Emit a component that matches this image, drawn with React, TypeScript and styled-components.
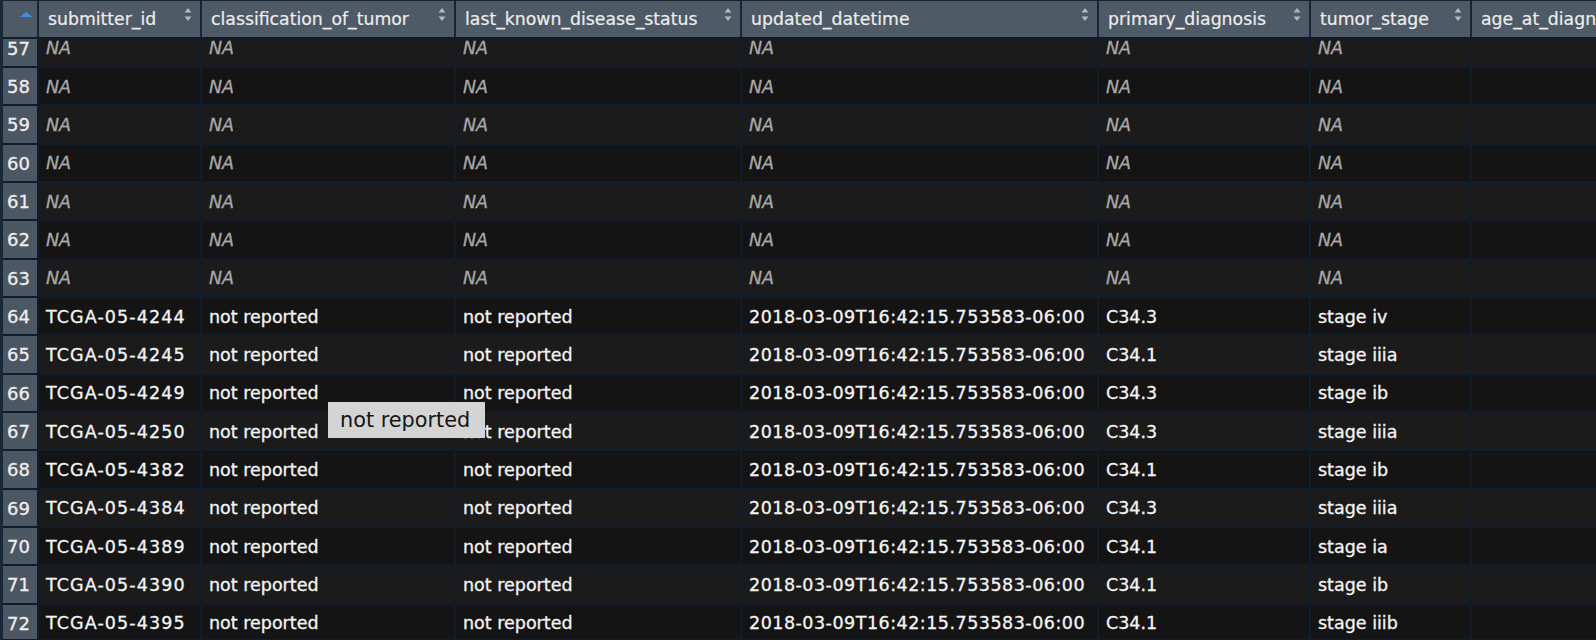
import React from "react";
import styled, { createGlobalStyle } from "styled-components";

const GlobalStyle = createGlobalStyle`
  html, body {
    margin: 0;
    padding: 0;
    background: #141414;
    overflow: hidden;
  }
  * { box-sizing: border-box; }
`;

const COLS = "34px 161px 252px 284px 355px 210px 159px 220px";
const GRID_LINE = "#0f1c2b";

const Viewer = styled.div`
  position: relative;
  width: 1596px;
  height: 640px;
  overflow: hidden;
  background: ${GRID_LINE};
  border-left: 3px solid #1a2737;
  font-family: "DejaVu Sans", "Lucida Grande", Verdana, sans-serif;
`;

const HeaderRow = styled.div`
  display: grid;
  grid-template-columns: ${COLS};
  column-gap: 2px;
  width: max-content;
  height: 39px;
  border-top: 1px solid #142232;
  border-bottom: 2px solid ${GRID_LINE};
  background: #172535;
  position: relative;
  z-index: 1;
`;

const HeaderCell = styled.div`
  display: flex;
  align-items: center;
  padding: 0 8px 0 9px;
  background: #4e5a66;
  color: #ececec;
  font-size: 17.3px;
  -webkit-text-stroke: 0.2px #ececec;
  white-space: nowrap;
  overflow: hidden;
`;

const CornerCell = styled.div`
  display: flex;
  justify-content: flex-end;
  align-items: flex-start;
  padding: 11px 5px 0 0;
  background: #4e5a66;
`;

const HeaderLabel = styled.span`
  flex: 0 0 auto;
  padding-bottom: 1px;
`;

const SortIcon = styled.svg`
  flex: 0 0 auto;
  margin-left: auto;
  align-self: flex-start;
  margin-top: 7px;
`;

const Body = styled.div`
  height: 600px;
  overflow: hidden;
`;

const BodyInner = styled.div`
  display: flex;
  flex-direction: column;
  row-gap: 2px;
  margin-top: -9.33px;
  width: max-content;
`;

const Row = styled.div`
  display: grid;
  grid-template-columns: ${COLS};
  column-gap: 2px;
  height: 36.33px;
`;

const RowNum = styled.div`
  display: flex;
  align-items: center;
  padding: 1px 0 0 4px;
  background: #4b5763;
  color: #eeeeee;
  font-size: 18px;
  -webkit-text-stroke: 0.3px #eeeeee;
`;

const Cell = styled.div<{ $odd: boolean; $na?: boolean; $tracking: number }>`
  display: flex;
  align-items: center;
  padding: 1px 7px 0 7px;
  background: ${(p) => (p.$odd ? "#1b1b1b" : "#141414")};
  color: ${(p) => (p.$na ? "#a8a8a8" : "#f4f4f4")};
  -webkit-text-stroke: 0.3px ${(p) => (p.$na ? "#a8a8a8" : "#f4f4f4")};
  font-style: ${(p) => (p.$na ? "italic" : "normal")};
  letter-spacing: ${(p) => (p.$na ? 0 : p.$tracking)}px;
  font-size: 17.5px;
  white-space: nowrap;
  overflow: hidden;
`;

const Tooltip = styled.div`
  position: absolute;
  left: 325px;
  top: 402px;
  width: 157px;
  height: 36px;
  display: flex;
  align-items: center;
  padding-left: 12px;
  background: #d4d4d4;
  color: #141414;
  font-size: 20.8px;
  z-index: 2;
`;

const headers = [
  "submitter_id",
  "classification_of_tumor",
  "last_known_disease_status",
  "updated_datetime",
  "primary_diagnosis",
  "tumor_stage",
  "age_at_diagnosis",
];

const TRACKING = [1.1, 0, 0, 0.5, 0, 0, 0];

const DATE = "2018-03-09T16:42:15.753583-06:00";

type RowData = { n: number; cells: (string | null)[] };

const reported: [string, string, string][] = [
  ["4244", "C34.3", "stage iv"],
  ["4245", "C34.1", "stage iiia"],
  ["4249", "C34.3", "stage ib"],
  ["4250", "C34.3", "stage iiia"],
  ["4382", "C34.1", "stage ib"],
  ["4384", "C34.3", "stage iiia"],
  ["4389", "C34.1", "stage ia"],
  ["4390", "C34.1", "stage ib"],
  ["4395", "C34.1", "stage iiib"],
];

const rows: RowData[] = [
  ...Array.from({ length: 7 }, (_, i) => ({
    n: 57 + i,
    cells: [null, null, null, null, null, null, ""],
  })),
  ...reported.map(([id, diag, stage], i) => ({
    n: 64 + i,
    cells: [
      `TCGA-05-${id}`,
      "not reported",
      "not reported",
      DATE,
      diag,
      stage,
      "",
    ],
  })),
];

const SortArrows = () => (
  <SortIcon width="8" height="13" viewBox="0 0 8 13">
    <path d="M4 0 L7.5 4.5 H0.5 Z" fill="#b3b9bf" />
    <path d="M0.5 8.5 H7.5 L4 13 Z" fill="#b3b9bf" />
  </SortIcon>
);

export default function App() {
  return (
    <>
      <GlobalStyle />
      <Viewer>
        <HeaderRow>
          <CornerCell>
            <svg width="12" height="5" viewBox="0 0 12 5">
              <path d="M6 0 L12 5 H0 Z" fill="#3d8fe6" />
            </svg>
          </CornerCell>
          {headers.map((h, i) => (
            <HeaderCell key={h}>
              <HeaderLabel>{h}</HeaderLabel>
              {i < headers.length - 1 && <SortArrows />}
            </HeaderCell>
          ))}
        </HeaderRow>
        <Body>
          <BodyInner>
            {rows.map((r) => (
              <Row key={r.n}>
                <RowNum>{r.n}</RowNum>
                {r.cells.map((c, j) => (
                  <Cell
                    key={j}
                    $odd={r.n % 2 === 1}
                    $na={c === null}
                    $tracking={TRACKING[j]}
                  >
                    {c === null ? "NA" : c}
                  </Cell>
                ))}
              </Row>
            ))}
          </BodyInner>
        </Body>
        <Tooltip>not reported</Tooltip>
      </Viewer>
    </>
  );
}
